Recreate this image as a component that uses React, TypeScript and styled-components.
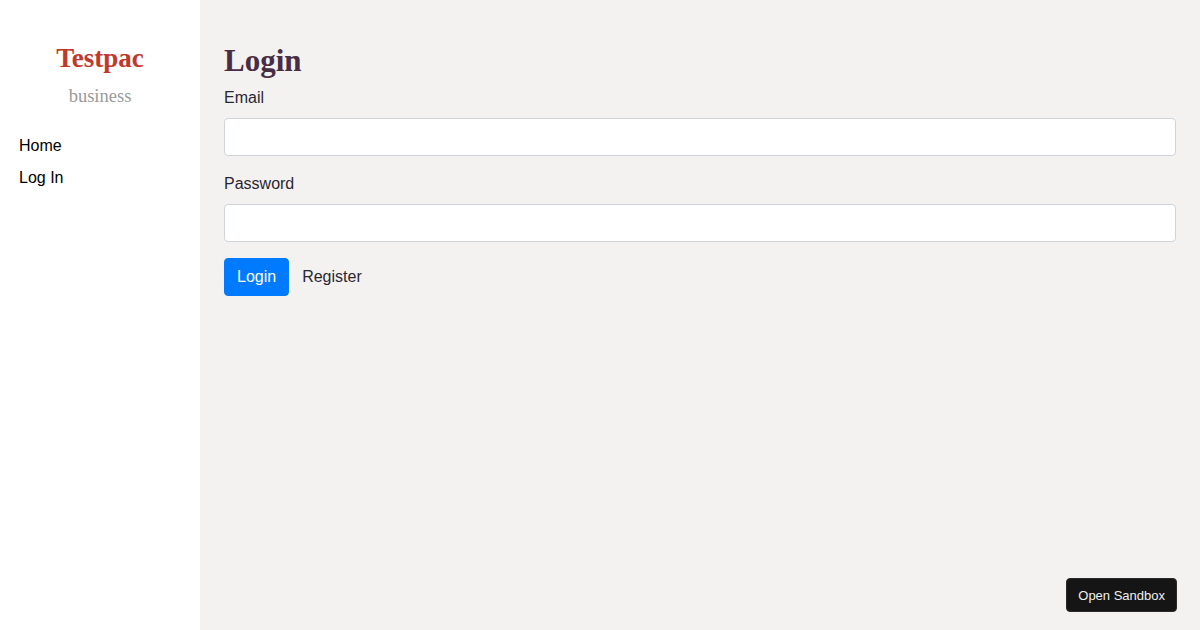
import styled, { createGlobalStyle } from 'styled-components';

const Global = createGlobalStyle`
  html, body {
    margin: 0;
    height: 100%;
  }
  body {
    font-family: 'Liberation Sans', Arial, sans-serif;
    color: #212529;
  }
  #root {
    height: 100%;
  }
`;

const Layout = styled.div`
  display: flex;
  height: 630px;
  overflow: hidden;
`;

const Sidebar = styled.aside`
  width: 200px;
  flex-shrink: 0;
  background: #ffffff;
  padding-top: 41px;
`;

const Brand = styled.div`
  text-align: center;
  font-family: 'Liberation Serif', 'Times New Roman', serif;
`;

const BrandName = styled.div`
  font-size: 27px;
  font-weight: bold;
  color: #c0392b;
  line-height: 34px;
`;

const BrandTag = styled.div`
  font-size: 18.5px;
  color: #9a9a9a;
  line-height: 26px;
  margin-top: 8px;
`;

const Nav = styled.nav`
  display: flex;
  flex-direction: column;
  padding: 21px 19px 0;
`;

const NavLink = styled.a`
  font-size: 16px;
  line-height: 32px;
  color: #000;
  text-decoration: none;
`;

const Main = styled.main`
  flex: 1;
  background: #f3f2f1;
  padding: 42px 24px 0;
  position: relative;
`;

const Heading = styled.h1`
  margin: 0 0 7px;
  font-family: 'Liberation Serif', 'Times New Roman', serif;
  font-size: 31px;
  font-weight: bold;
  line-height: 37px;
  color: #482d45;
`;

const Field = styled.div`
  margin-bottom: 16px;
`;

const Label = styled.label`
  display: block;
  font-size: 16px;
  line-height: 24px;
  margin-bottom: 8px;
  color: #2b2730;
`;

const Input = styled.input`
  display: block;
  box-sizing: border-box;
  width: 100%;
  height: 38px;
  padding: 6px 12px;
  font-size: 16px;
  border: 1px solid #ced4da;
  border-radius: 4px;
  background: #fff;
  outline: none;
`;

const Actions = styled.div`
  display: flex;
  align-items: center;
`;

const Button = styled.button`
  font-family: 'Liberation Sans', Arial, sans-serif;
  font-size: 16px;
  line-height: 24px;
  padding: 6px 12px;
  border: 1px solid #007bff;
  border-radius: 4px;
  background: #007bff;
  color: #fff;
`;

const TextLink = styled.a`
  font-size: 16px;
  line-height: 24px;
  margin-left: 13px;
  color: #2b2730;
  text-decoration: none;
`;

const SandboxButton = styled.button`
  position: absolute;
  right: 23px;
  bottom: 18px;
  height: 34px;
  padding: 0 11px;
  font-family: 'Liberation Sans', Arial, sans-serif;
  font-size: 13px;
  color: #f0f0f0;
  background: #151515;
  border: 1px solid #2a2a2a;
  border-radius: 4px;
`;

export default function App() {
  return (
    <>
      <Global />
      <Layout>
        <Sidebar>
          <Brand>
            <BrandName>Testpac</BrandName>
            <BrandTag>business</BrandTag>
          </Brand>
          <Nav>
            <NavLink href="#">Home</NavLink>
            <NavLink href="#">Log In</NavLink>
          </Nav>
        </Sidebar>
        <Main>
          <Heading>Login</Heading>
          <Field>
            <Label>Email</Label>
            <Input type="email" />
          </Field>
          <Field>
            <Label>Password</Label>
            <Input type="password" />
          </Field>
          <Actions>
            <Button>Login</Button>
            <TextLink href="#">Register</TextLink>
          </Actions>
          <SandboxButton>Open Sandbox</SandboxButton>
        </Main>
      </Layout>
    </>
  );
}
